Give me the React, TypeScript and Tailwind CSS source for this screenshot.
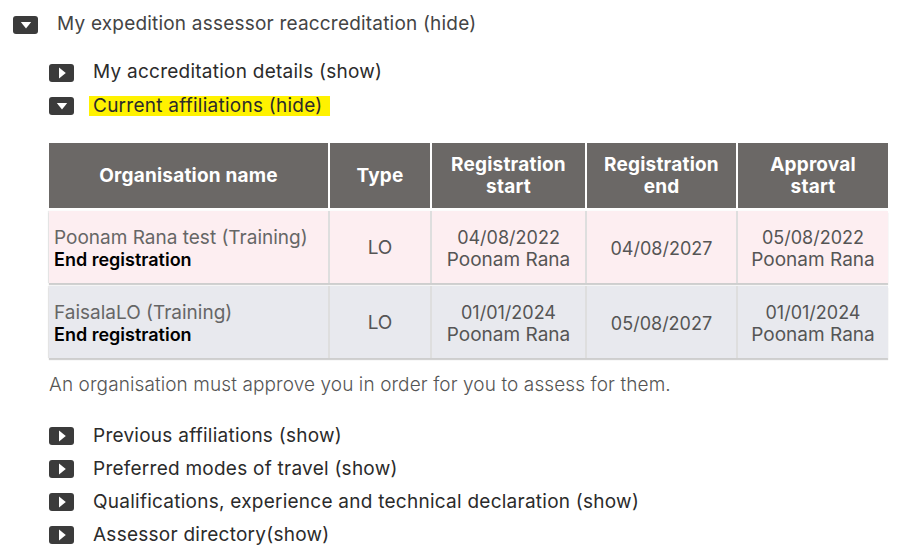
import React from "react";

type Row = {
  org: string;
  type: string;
  regStart: string;
  regEnd: string;
  approvalStart: string;
  by: string;
  bg: string;
};

const rows: Row[] = [
  {
    org: "Poonam Rana test (Training)",
    type: "LO",
    regStart: "04/08/2022",
    regEnd: "04/08/2027",
    approvalStart: "05/08/2022",
    by: "Poonam Rana",
    bg: "bg-[#fdeef1]",
  },
  {
    org: "FaisalaLO (Training)",
    type: "LO",
    regStart: "01/01/2024",
    regEnd: "05/08/2027",
    approvalStart: "01/01/2024",
    by: "Poonam Rana",
    bg: "bg-[#e8e9ee]",
  },
];

const cols = "grid w-fit grid-cols-[279px_100px_153px_149px_150px] gap-[2px]";

// Small dark toggle box with a white triangle.
const Toggle = ({ open }: { open: boolean }) => (
  <span className="flex h-[18px] w-[25px] shrink-0 items-center justify-center rounded-[3px] bg-[#3b3b3b]">
    <svg width="12" height="12" viewBox="0 0 12 12">
      {open ? (
        <path d="M0.8 3h10.4L6 9.6z" fill="#fff" />
      ) : (
        <path d="M3 0.6v10.8L9.8 6z" fill="#fff" />
      )}
    </svg>
  </span>
);

const Item = ({ label, open = false, highlight = false }: { label: string; open?: boolean; highlight?: boolean }) => (
  <div className="flex h-[33px] items-center">
    <Toggle open={open} />
    <span
      className={
        highlight
          ? "ml-[15px] bg-[#fff200] pl-[4px] pr-[8px] text-[19px] leading-[20px] tracking-[0.25px] text-[#2b2b2b]"
          : "ml-[19px] text-[19px] tracking-[0.25px] text-[#2b2b2b]"
      }
    >
      {label}
    </span>
  </div>
);

const headers = [
  ["Organisation name"],
  ["Type"],
  ["Registration", "start"],
  ["Registration", "end"],
  ["Approval", "start"],
];

export default function App() {
  return (
    <div className="min-h-screen bg-white" style={{ fontFamily: "Inter, 'Open Sans', sans-serif" }}>
      <div className="pl-[13px] pt-[8px]">
        <div className="flex h-[33px] items-center">
          <Toggle open />
          <span className="ml-[19px] text-[19px] tracking-[0.2px] text-[#444]">
            My expedition assessor reaccreditation (hide)
          </span>
        </div>

        <div className="ml-[36px] mt-[15px]">
          <Item label="My accreditation details (show)" />
          <Item label="Current affiliations (hide)" open highlight />

          {/* Affiliations table */}
          <div className="mt-[21px]">
            <div className={cols}>
              {headers.map((h) => (
                <div
                  key={h.join(" ")}
                  className="flex h-[65px] flex-col items-center justify-center bg-[#6b6866] text-center text-[19px] font-bold leading-[22px] tracking-[0.2px] text-white"
                >
                  {h.map((line) => (
                    <span key={line}>{line}</span>
                  ))}
                </div>
              ))}
            </div>

            {rows.map((r, i) => (
              <div
                key={r.org}
                className={`${cols} ${i === 0 ? "mb-[3px] mt-[3px]" : ""} bg-[#dedede] shadow-[0_2px_1px_rgba(0,0,0,0.18),-1px_0_1px_rgba(0,0,0,0.08)]`}
              >
                <div className={`${r.bg} flex h-[72px] flex-col justify-center px-[5px] pt-[3px] text-[19px] leading-[22px]`}>
                  <span className="text-[#666]">{r.org}</span>
                  <span className="text-[18px] font-semibold text-black">End registration</span>
                </div>
                <div className={`${r.bg} flex items-center justify-center pt-[3px] text-[19px] text-[#555]`}>{r.type}</div>
                <div className={`${r.bg} flex flex-col items-center justify-center pt-[3px] text-[19px] leading-[22px] text-[#555]`}>
                  <span className="text-[18px]">{r.regStart}</span>
                  <span>{r.by}</span>
                </div>
                <div className={`${r.bg} flex items-center justify-center pt-[3px] text-[18px] text-[#555]`}>{r.regEnd}</div>
                <div className={`${r.bg} flex flex-col items-center justify-center pt-[3px] text-[19px] leading-[22px] text-[#555]`}>
                  <span className="text-[18px]">{r.approvalStart}</span>
                  <span>{r.by}</span>
                </div>
              </div>
            ))}
          </div>

          <p className="mt-[13px] text-[19px] font-light tracking-[0.1px] text-[#555]">
            An organisation must approve you in order for you to assess for them.
          </p>

          <div className="mt-[20px]">
            <Item label="Previous affiliations (show)" />
            <Item label="Preferred modes of travel (show)" />
            <Item label="Qualifications, experience and technical declaration (show)" />
            <Item label="Assessor directory(show)" />
          </div>
        </div>
      </div>
    </div>
  );
}
